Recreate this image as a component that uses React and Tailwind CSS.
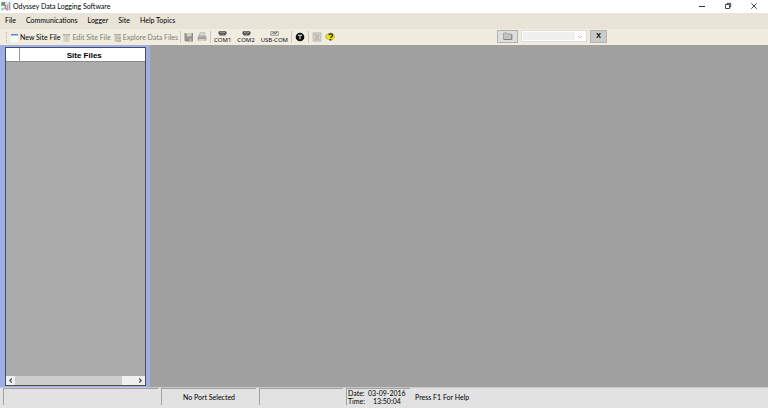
import React from 'react';

const menus = ['File', 'Communications', 'Logger', 'Site', 'Help Topics'];

function AppIcon() {
  return (
    <svg className="h-[10px] w-[10px] shrink-0" viewBox="0 0 10 10" aria-hidden="true">
      <rect width="10" height="10" fill="#e6eeee" />
      <path d="M0 1h4v4H0z" fill="#7fb596" />
      <path d="M1 2l2 2 1-3" stroke="#347a67" fill="none" />
      <path d="M3 3l2 2-1 2 3 2" stroke="#d8626c" strokeWidth="1.200" fill="none" />
      <path d="M6 2h4v7H6z" fill="#cdd6df" />
      <path d="M6.500 4v5M8.500 1v8" stroke="#9badbb" />
      <path d="M0 7h3v2H0z" fill="#9ed3ce" />
    </svg>
  );
}

function WindowIcon({ muted = false, tree = false }) {
  return (
    <svg className="h-[9px] w-[8px] shrink-0" viewBox="0 0 8 9" aria-hidden="true">
      <path d="M1 1h7v8H1z" fill={muted ? '#dedcd2' : '#fbfbf8'} />
      <path d="M1 1h7v1.500H1z" fill={muted ? '#b3b1aa' : '#5c86c4'} />
      {muted && !tree && <path d="M2 4h5M2 6h5M2 8h5M4.500 3v6" stroke="#c3c1b9" strokeWidth=".7" />}
      {tree && <path d="M3 3v5h2M3 5h2M5.500 4h2v1.500h-2zM5.500 7h2v1.500h-2z" stroke="#a4a29b" strokeWidth=".8" fill="none" />}
    </svg>
  );
}

function SaveIcon() {
  return (
    <svg className="h-[10px] w-[10px]" viewBox="0 0 10 10" aria-hidden="true">
      <path d="M.5 1h8.500v8.500H1.500L.5 8.500z" fill="#8f8e8a" />
      <path d="M2.500 1h5v3.500h-5z" fill="#d2d0c8" />
      <path d="M3 6.500h4.500v3H3z" fill="#b9b7b0" />
      <path d="M3.500 7h1.300v2H3.500z" fill="#747370" />
    </svg>
  );
}

function PrinterIcon() {
  return (
    <svg className="h-[10px] w-[10px]" viewBox="0 0 10 10" aria-hidden="true">
      <path d="M3 .8h5L7 4H2z" fill="#dddbd3" stroke="#aaa8a2" strokeWidth=".7" />
      <path d="M.5 4.500L2 3.500h7l.5 1v4H.5z" fill="#b4b2ac" />
      <path d="M1 6h8M2 8.500h6" stroke="#8b8a86" strokeWidth=".8" />
      <path d="M2 7h5.500v2H2z" fill="#d5d3cb" />
    </svg>
  );
}

function PortIcon({ usb = false }) {
  return usb ? (
    <svg className="h-[5px] w-[9px]" viewBox="0 0 9 5" aria-hidden="true">
      <path d="M.5.5h8v4h-8z" fill="#dddcd6" stroke="#8c8b88" strokeWidth=".6" />
      <path d="M1.500 3.500l1.500-2h2l1 2M3 3l4-1.500M6 1.300h1.500" stroke="#5a5a58" strokeWidth=".6" fill="none" />
    </svg>
  ) : (
    <svg className="h-[5px] w-[9px]" viewBox="0 0 9 5" aria-hidden="true">
      <path d="M.5 1q0-.7 1-.7h6q1 0 1 .7v1.500L7.200 4.500H1.800L.5 2.500z" fill="#4c4b49" />
      <path d="M2 1.500h5.200M2.700 3h3.800" stroke="#e6e4dc" strokeWidth=".7" strokeDasharray=".8 .6" />
    </svg>
  );
}

function TimeIcon() {
  return (
    <svg className="h-[10px] w-[10px]" viewBox="0 0 10 10" aria-hidden="true">
      <circle cx="5" cy="5" r="4.300" fill="#111" />
      <path d="M3 3.300h4M5 3.300v4" stroke="#eeede4" strokeWidth="1" />
    </svg>
  );
}

function SheetIcon() {
  return (
    <svg className="h-[10px] w-[10px]" viewBox="0 0 10 10" aria-hidden="true">
      <path d="M1 .8h8v8.400H1z" fill="#d3d1c9" stroke="#b1afa8" strokeWidth=".7" />
      <path d="M2.500 3h5M2.500 7.300h5M3 3l4 4M7 3L3 7" stroke="#a9a7a1" strokeWidth=".7" />
    </svg>
  );
}

function HelpIcon() {
  return (
    <svg className="h-[10px] w-[10px]" viewBox="0 0 10 10" aria-hidden="true">
      <path d="M.5 4L3 1.500 7 1l2 2 .3 3L7 8 3.500 7.500l-2-1z" fill="#f0e51b" stroke="#8b851b" strokeWidth=".5" />
      <path d="M4 3.300C4 1.300 7.500 1.300 7.500 3.300 7.500 4.700 5.800 4.500 5.500 6" stroke="#1e1d0a" strokeWidth="1.200" fill="none" />
      <path d="M4.700 7h1.500v1.500H4.700z" fill="#1e1d0a" />
    </svg>
  );
}

function Separator() {
  return <div className="h-3 w-px shrink-0 bg-[#cbc9c0]" />;
}

function ToolButton({ icon, label, disabled = false }) {
  return (
    <button type="button" disabled={disabled} className="flex shrink-0 items-center gap-[2px] whitespace-nowrap text-black disabled:text-[#7c7b77]">
      {icon}
      <span>{label}</span>
    </button>
  );
}

function PortButton({ label, usb }) {
  return (
    <button type="button" className="flex shrink-0 flex-col items-center whitespace-nowrap font-['Open_Sans','Noto_Sans',sans-serif] text-[6px] text-black">
      <PortIcon usb={usb} />
      <span className="leading-[8px]">{label}</span>
    </button>
  );
}

function StatusPanel({ className, children }) {
  return (
    <div className={'flex shrink-0 items-center border-t border-l border-[#a2a2a2] ' + className}>
      {children}
    </div>
  );
}

export default function App() {
  return (
    <div className="flex min-h-screen flex-col bg-[#a0a0a0] font-['Lato','Open_Sans',sans-serif] text-[7px] leading-[10px] text-black">
      <header className="flex h-[13px] items-center justify-between bg-white pb-px pl-px">
        <div className="flex items-center gap-[2px]">
          <AppIcon />
          <h1>Odyssey Data Logging Software</h1>
        </div>
        <div className="flex items-center gap-4 pr-[9px]">
          <button type="button" aria-label="Minimize" className="flex h-[10px] w-[10px] items-center justify-center">
            <svg className="h-2 w-2" viewBox="0 0 8 8"><path d="M1 4.500h6" stroke="#333" /></svg>
          </button>
          <button type="button" aria-label="Restore" className="flex h-[10px] w-[10px] items-center justify-center">
            <svg className="h-2 w-2" viewBox="0 0 8 8"><path d="M1.500 2.500h4v4h-4zM3 2V1.300h3.700V5H6" stroke="#333" strokeWidth=".9" fill="none" /></svg>
          </button>
          <button type="button" aria-label="Close" className="flex h-[10px] w-[10px] items-center justify-center">
            <svg className="h-2 w-2" viewBox="0 0 8 8"><path d="M1.300 1.300l5.400 5.400M6.700 1.300L1.300 6.700" stroke="#333" strokeWidth=".9" /></svg>
          </button>
        </div>
      </header>

      <nav className="flex h-4 items-center gap-[10px] bg-[#e8e4d8] pb-[2px] pl-[5px]">
        {menus.map((m) => (
          <button type="button" key={m}>{m}</button>
        ))}
      </nav>

      <div className="flex h-4 items-center bg-[#f0ede0]">
        <div className="flex w-[497px] shrink-0 items-center pl-[6px]">
          <div className="h-[11px] shrink-0 border-l border-dotted border-[#b9b7af] pr-[3px]" />
          <div className="flex items-center gap-[2px]">
            <ToolButton icon={<WindowIcon />} label="New Site File" />
            <ToolButton icon={<WindowIcon muted />} label="Edit Site File" disabled />
            <ToolButton icon={<WindowIcon muted tree />} label="Explore Data Files" disabled />
          </div>
          <div className="flex items-center gap-[3px] pl-[2px]">
            <Separator />
            <button type="button" aria-label="Save" disabled><SaveIcon /></button>
            <button type="button" aria-label="Print" disabled><PrinterIcon /></button>
            <Separator />
          </div>
          <div className="flex items-center gap-[6px] px-[3px]">
            <PortButton label="COM1" />
            <PortButton label="COM2" />
            <PortButton label="USB-COM" usb />
          </div>
          <div className="flex items-center gap-[3px]">
            <Separator />
            <button type="button" aria-label="Set time"><TimeIcon /></button>
            <Separator />
            <button type="button" aria-label="Export sheet" disabled><SheetIcon /></button>
            <button type="button" aria-label="Help"><HelpIcon /></button>
          </div>
        </div>
        <div className="flex items-center gap-[3px] pb-[2px]">
          <button type="button" aria-label="Open folder" className="flex h-[13px] w-[21px] items-center justify-center border border-[#b0b0ae] bg-[#dededc]">
            <svg className="h-2 w-[10px]" viewBox="0 0 10 8" aria-hidden="true">
              <path d="M.5 1h3.500l1 1h3.500v5.500h-8z" fill="#c2c2c0" stroke="#8e8e8c" strokeWidth=".7" />
              <path d="M9 2.500v5H1" stroke="#777" strokeWidth=".7" fill="none" />
            </svg>
          </button>
          <div className="relative h-3 w-[66px] border border-[#dedcd4] bg-white p-px">
            <select aria-label="Site folder" disabled className="block h-2 w-[52px] appearance-none bg-[#f0f0f0]">
              <option></option>
            </select>
            <svg className="pointer-events-none absolute top-[4px] right-[3px] h-1 w-[6px]" viewBox="0 0 6 4" aria-hidden="true">
              <path d="M1 1l2 2 2-2" stroke="#b9b9b9" strokeWidth=".9" fill="none" />
            </svg>
          </div>
          <button type="button" className="h-[13px] w-[17px] border border-[#b4b4b2] bg-[#cacac9] text-center font-['Open_Sans',sans-serif] font-bold">X</button>
        </div>
      </div>

      <main className="flex flex-1">
        <aside className="flex w-[150px] shrink-0 flex-col border-r-4 border-l-[5px] border-[#9cb0e6] bg-[#9cb0e6] pt-[2px] pb-px">
          <div className="flex flex-1 flex-col border border-[#4b4d58] bg-[#ababab]">
            <table className="w-full table-fixed border-collapse bg-white font-['Liberation_Sans',Arial,sans-serif] text-[8px]">
              <thead>
                <tr className="border-b border-[#8a8a8a]">
                  <th className="w-[13px] border-r border-[#999] p-0" aria-label="Row"></th>
                  <th className="pt-[3px] pb-0 pl-1 text-center font-bold text-black">Site Files</th>
                </tr>
              </thead>
            </table>
            <div className="mt-auto flex h-[9px] items-center bg-[#f0f0f0]">
              <button type="button" aria-label="Scroll left" className="flex w-[9px] shrink-0 justify-center">
                <svg className="h-[7px] w-[5px]" viewBox="0 0 5 7"><path d="M3.800 1.500l-2 2 2 2" stroke="#444" strokeWidth="1.100" fill="none" /></svg>
              </button>
              <div className="flex h-full flex-1">
                <div className="h-full w-[107px] bg-[#cdcdcd]" />
              </div>
              <button type="button" aria-label="Scroll right" className="flex w-[9px] shrink-0 justify-center">
                <svg className="h-[7px] w-[5px]" viewBox="0 0 5 7"><path d="M1.200 1.500l2 2-2 2" stroke="#444" strokeWidth="1.100" fill="none" /></svg>
              </button>
            </div>
          </div>
        </aside>
        <section aria-label="Workspace" className="flex-1 bg-[#a0a0a0]" />
      </main>

      <footer className="flex h-[21px] items-stretch gap-[3px] border-t border-[#c9c9c9] bg-[#e2e2e2] pb-[3px] pl-[3px]">
        <StatusPanel className="w-[155px]" />
        <StatusPanel className="w-[95px] justify-center">No Port Selected</StatusPanel>
        <StatusPanel className="w-[84px]" />
        <StatusPanel className="w-[64px]">
          <dl className="grid grid-cols-[20px_auto] pl-px leading-[8px]">
            <dt>Date:</dt>
            <dd className="text-center">03-09-2016</dd>
            <dt>Time:</dt>
            <dd className="text-center">13:50:04</dd>
          </dl>
        </StatusPanel>
        <p className="flex items-center pl-[2px]">Press F1 For Help</p>
      </footer>
    </div>
  );
}
